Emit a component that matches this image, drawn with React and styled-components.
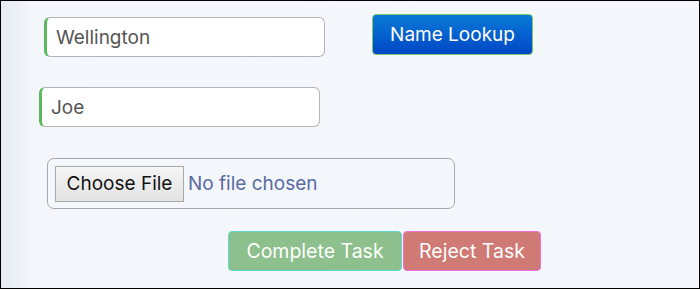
import React from "react";
import styled, { createGlobalStyle } from "styled-components";

const GlobalStyle = createGlobalStyle`
  html, body {
    margin: 0;
    padding: 0;
  }
  body {
    font-family: "Inter", "Noto Sans", sans-serif;
  }
`;

const Frame = styled.div`
  width: 700px;
  height: 289px;
  box-sizing: border-box;
  border: 1px solid #000;
  background: linear-gradient(to right, #e6ebf2 0px, #f3f6fb 30px, #f4f7fc 100%);
  display: flex;
  flex-direction: column;
`;

const Row = styled.div`
  display: flex;
  align-items: flex-start;
  margin-left: ${(p) => p.$indent}px;
  margin-top: ${(p) => p.$top}px;
  gap: ${(p) => p.$gap || 0}px;
`;

const TextField = styled.input`
  width: 281px;
  height: 40px;
  box-sizing: border-box;
  margin-top: ${(p) => p.$offset || 0}px;
  border: 1px solid #b4b4b4;
  border-left: 3px solid #5cb85c;
  border-radius: 6px;
  background: #fff;
  padding: 0 10px 0 9px;
  font-family: inherit;
  font-size: 19px;
  color: #555;
  outline: none;
`;

const LookupButton = styled.button`
  width: 161px;
  height: 41px;
  box-sizing: border-box;
  border: 1px solid #7cc76c;
  border-radius: 4px;
  background: linear-gradient(to bottom, #0a7ad6, #0047c7);
  color: #fff;
  font-family: inherit;
  font-size: 19px;
  padding: 0;
  cursor: pointer;
`;

const FileBox = styled.div`
  width: 408px;
  height: 51px;
  box-sizing: border-box;
  border: 1px solid #a8a8a8;
  border-radius: 7px;
  display: flex;
  align-items: center;
  padding-left: 7px;
  gap: 4px;
`;

const ChooseButton = styled.span`
  width: 129px;
  height: 36px;
  box-sizing: border-box;
  border: 1px solid #a9a9a9;
  background: linear-gradient(to bottom, #f4f4f4, #e3e3e3);
  color: #111;
  font-size: 19px;
  display: flex;
  align-items: center;
  justify-content: center;
`;

const FileStatus = styled.span`
  color: #5a6aa2;
  font-size: 19px;
`;

const TaskButton = styled.button`
  height: 40px;
  width: ${(p) => p.$width}px;
  box-sizing: border-box;
  border: 1px solid ${(p) => p.$edge};
  border-radius: 4px;
  background: ${(p) => p.$fill};
  color: #fff;
  font-family: inherit;
  font-size: 19.5px;
  padding: 0;
  cursor: pointer;
`;

export default function App() {
  return (
    <>
      <GlobalStyle />
      <Frame>
        <Row $indent={43} $top={13} $gap={47}>
          <TextField $offset={3} defaultValue="Wellington" readOnly />
          <LookupButton>Name Lookup</LookupButton>
        </Row>
        <Row $indent={38} $top={30}>
          <TextField defaultValue="Joe" readOnly />
        </Row>
        <Row $indent={46} $top={31}>
          <FileBox>
            <ChooseButton>Choose File</ChooseButton>
            <FileStatus>No file chosen</FileStatus>
          </FileBox>
        </Row>
        <Row $indent={227} $top={22} $gap={1}>
          <TaskButton $width={174} $fill="#8dc08c" $edge="#5fd9cf">
            Complete Task
          </TaskButton>
          <TaskButton $width={138} $fill="#cf7a74" $edge="#ee6fe0">
            Reject Task
          </TaskButton>
        </Row>
      </Frame>
    </>
  );
}
